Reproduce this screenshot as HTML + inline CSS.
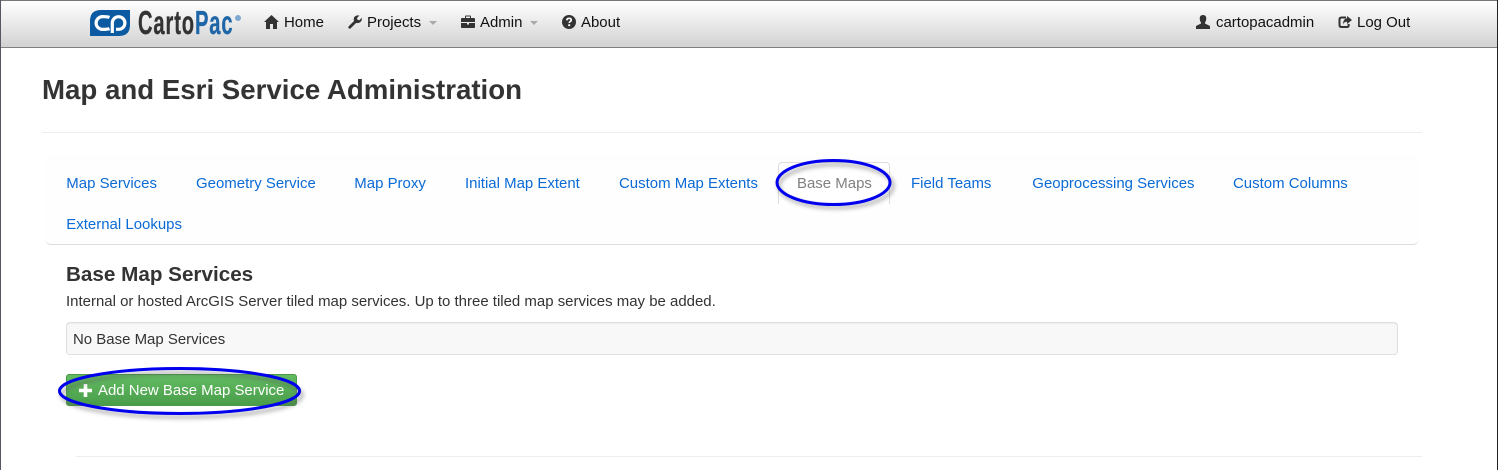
<!DOCTYPE html>
<html><head><meta charset="utf-8"><style>
html,body{margin:0;padding:0;background:#fff}
body{width:1498px;height:470px;position:relative;overflow:hidden;font-family:"Liberation Sans",sans-serif;font-size:14.97px;color:#333}
.a{position:absolute;white-space:nowrap}
.nav{left:0;top:0;width:1498px;height:46px;box-sizing:content-box;background:linear-gradient(#fff,#d4d4d4 95%);border-top:1px solid #777;border-bottom:1px solid #808080}
.n{color:#111;font-size:14.97px;line-height:20px;top:13px}
.l{color:#0a6ad6;font-size:14.97px;line-height:20px}
svg{position:absolute;overflow:visible}
.caret{width:0;height:0;border-left:4px solid transparent;border-right:4px solid transparent;border-top:4px solid #aaa;top:21px}
</style></head><body>
<div class="a nav"></div>
<div class="a" style="left:0;top:0;width:1px;height:470px;background:#556"></div>
<div class="a" style="left:1497px;top:0;width:1px;height:470px;background:#222"></div>

<svg style="left:90px;top:10px" width="40" height="26" viewBox="0 0 40 26"><path d="M11 0H40V15Q40 26 29 26H0V11Q0 0 11 0Z" fill="#0b5aa2"/><path d="M19.500 7.400Q17.500 6.600 12.500 6.600A6.400 6.400 0 0 0 12.500 19.400Q17.500 19.400 19.500 18.600M22.300 23V13A6.300 6.300 0 1 1 28.600 19.300H26" fill="none" stroke="#fff" stroke-width="3.200"/></svg>
<div class="a" style="left:138px;top:6px;font-size:33.500px;line-height:36px;color:#333;transform-origin:0 0;transform:scaleX(.6);font-weight:bold;letter-spacing:1.500px;-webkit-text-stroke:.3px currentColor">Carto<span style="color:#1f66a8">Pac</span></div>
<div class="a" style="left:235px;top:15px;width:6px;height:6px;border-radius:50%;background:#7fa8d0"></div>

<svg style="left:264px;top:15px" width="15" height="14" viewBox="0 0 15 14"><path d="M7.500 0L15 7H13V14H9V9H6V14H2V7H0Z" fill="#333"/></svg>
<div class="a n" style="left:284px">Home</div>
<svg style="left:348px;top:15px" width="14" height="14" viewBox="0 0 14 14"><path d="M0.500 11.500L6 6Q5 2.500 7.500 1Q9.500 0 11.500 .5L9 3L9.500 4.800L11.300 5.200L13.800 2.800Q14.200 5.500 12.500 7Q10.500 8.500 8 8L2.500 13.500Q1.500 14 .7 13.300Q0 12.500 .5 11.500Z" fill="#333"/></svg>
<div class="a n" style="left:367px">Projects</div>
<div class="a caret" style="left:429px"></div>
<svg style="left:461px;top:15px" width="14" height="13" viewBox="0 0 14 13"><path d="M1 3H4V1.500Q4 .5 5 .5H9Q10 .5 10 1.500V3H13Q14 3 14 4V7H0V4Q0 3 1 3ZM5 3H9V1.500H5ZM0 8H6V9.500H8V8H14V12Q14 13 13 13H1Q0 13 0 12Z" fill="#333" fill-rule="evenodd"/></svg>
<div class="a n" style="left:480px">Admin</div>
<div class="a caret" style="left:530px"></div>
<svg style="left:562px;top:15px" width="14" height="14" viewBox="0 0 14 14"><circle cx="7" cy="7" r="7" fill="#333"/><path d="M4.800 5.300Q5 3.300 7 3.300Q9.200 3.300 9.200 5Q9.200 6 8 6.700Q7.300 7.100 7.300 8" fill="none" stroke="#fff" stroke-width="1.700"/><rect x="6.200" y="9.300" width="2" height="1.800" fill="#fff"/></svg>
<div class="a n" style="left:581px">About</div>

<svg style="left:1196px;top:15px" width="14" height="14" viewBox="0 0 14 14"><path d="M7 0Q10.300 0 10.300 3.500Q10.300 6 9 7.500V8.500L14 11V14H0V11L5 8.500V7.500Q3.700 6 3.700 3.500Q3.700 0 7 0Z" fill="#333"/></svg>
<div class="a n" style="left:1216px">cartopacadmin</div>
<svg style="left:1338px;top:15px" width="14" height="14" viewBox="0 0 14 14"><path d="M8 2.500H3.500Q1.500 2.500 1.500 4.500V10Q1.500 12 3.500 12H9Q10.700 12 10.700 10V9" fill="none" stroke="#333" stroke-width="2"/><path d="M9 1L14 5L9 9V6.800Q6 6.800 5 9.500Q5 3.800 9 3.300Z" fill="#333"/></svg>
<div class="a n" style="left:1357px">Log Out</div>

<div class="a" style="left:42px;top:73px;font-size:27.660px;line-height:34px;font-weight:bold;color:#333">Map and Esri Service Administration</div>
<div class="a" style="left:42px;top:132px;width:1380px;height:1px;background:#eee"></div>

<div class="a" style="left:45px;top:155px;width:1374px;height:90px;box-sizing:border-box;border-bottom:1px solid #ddd;border-radius:0 0 6px 6px;background:#fefefe"></div>
<div class="a" style="left:778px;top:162px;width:112px;height:42px;box-sizing:border-box;border:1px solid #ddd;border-bottom:0;border-radius:4px 4px 0 0;background:#fff"></div>
<div class="a l" style="left:66.300px;top:174px">Map Services</div>
<div class="a l" style="left:196px;top:174px">Geometry Service</div>
<div class="a l" style="left:354.300px;top:174px">Map Proxy</div>
<div class="a l" style="left:465px;top:174px">Initial Map Extent</div>
<div class="a l" style="left:619px;top:174px">Custom Map Extents</div>
<div class="a l" style="left:797px;top:174px;color:#808080">Base Maps</div>
<div class="a l" style="left:911px;top:174px">Field Teams</div>
<div class="a l" style="left:1032.300px;top:174px">Geoprocessing Services</div>
<div class="a l" style="left:1233px;top:174px">Custom Columns</div>
<div class="a l" style="left:66.300px;top:215px">External Lookups</div>

<div class="a" style="left:66px;top:263px;font-size:20.660px;line-height:24px;font-weight:bold;color:#333">Base Map Services</div>
<div class="a" style="left:66px;top:292px;line-height:20px">Internal or hosted ArcGIS Server tiled map services. Up to three tiled map services may be added.</div>
<div class="a" style="left:66px;top:322px;width:1332px;height:33px;box-sizing:border-box;background:#f8f8f8;border:1px solid #e0e0e0;border-radius:4px;padding:7px 6px 5px;line-height:20px;box-shadow:inset 0 1px 1px rgba(0,0,0,.05)">No Base Map Services</div>

<div class="a" style="left:66px;top:374px;width:231px;height:32px;box-sizing:border-box;border-radius:3px;border:1px solid #4b9a4b;background:linear-gradient(#62bb62,#4a9e4a)"></div>
<svg style="left:79px;top:383.500px" width="13" height="13" viewBox="0 0 13 13"><path d="M4.700 0H8.300V4.700H13V8.300H8.300V13H4.700V8.300H0V4.700H4.700Z" fill="#fff"/></svg>
<div class="a" style="left:98px;top:381px;line-height:20px;color:#fff">Add New Base Map Service</div>

<svg style="left:0;top:0" width="1498" height="470">
<defs><filter id="s" x="-10%" y="-40%" width="120%" height="200%"><feGaussianBlur stdDeviation="2"/></filter></defs>
<ellipse cx="836" cy="186" rx="57" ry="21.500" fill="none" stroke="#555" stroke-width="3" opacity=".5" filter="url(#s)"/>
<ellipse cx="833.500" cy="182.500" rx="56.500" ry="22" fill="none" stroke="#0000ee" stroke-width="3"/>
<ellipse cx="182" cy="395" rx="120" ry="22" fill="none" stroke="#555" stroke-width="3" opacity=".5" filter="url(#s)"/>
<ellipse cx="179.500" cy="391" rx="120" ry="22.500" fill="none" stroke="#0000ee" stroke-width="3"/>
</svg>

<div class="a" style="left:76px;top:456px;width:1346px;height:1px;background:#eee"></div>
</body></html>
